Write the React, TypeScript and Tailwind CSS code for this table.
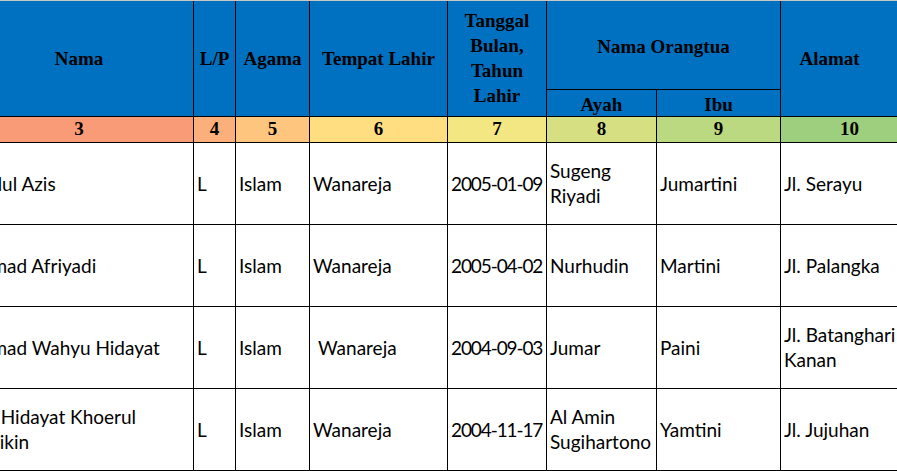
import React from 'react';

interface Siswa {
  nama: string;
  lp: string;
  agama: string;
  tempat: string;
  tanggal: string;
  ayah: string;
  ibu: string;
  alamat: string;
  indent?: boolean;
}

const rows: Siswa[] = [
  { nama: 'Abdul Azis', lp: 'L', agama: 'Islam', tempat: 'Wanareja', tanggal: '2005-01-09', ayah: 'Sugeng Riyadi', ibu: 'Jumartini', alamat: 'Jl. Serayu' },
  { nama: 'Ahmad Afriyadi', lp: 'L', agama: 'Islam', tempat: 'Wanareja', tanggal: '2005-04-02', ayah: 'Nurhudin', ibu: 'Martini', alamat: 'Jl. Palangka' },
  { nama: 'Ahmad Wahyu Hidayat', lp: 'L', agama: 'Islam', tempat: 'Wanareja', tanggal: '2004-09-03', ayah: 'Jumar', ibu: 'Paini', alamat: 'Jl. Batanghari Kanan', indent: true },
  { nama: 'Adi Hidayat Khoerul Sodikin', lp: 'L', agama: 'Islam', tempat: 'Wanareja', tanggal: '2004-11-17', ayah: 'Al Amin Sugihartono', ibu: 'Yamtini', alamat: 'Jl. Jujuhan' },
];

// nomor kolom dengan warna gradasi seperti di lembar excel
const nomor = [
  { n: '3', bg: 'bg-[#f99b77]' },
  { n: '4', bg: 'bg-[#fbb07b]' },
  { n: '5', bg: 'bg-[#fdc57e]' },
  { n: '6', bg: 'bg-[#ffde82]' },
  { n: '7', bg: 'bg-[#f3e783]' },
  { n: '8', bg: 'bg-[#d6df82]' },
  { n: '9', bg: 'bg-[#bbd980]' },
  { n: '10', bg: 'bg-[#9ecf7e]' },
];

const th = 'border border-black bg-[#0070c0] text-center align-middle font-bold text-black p-0';
const td = 'border border-black align-middle text-left text-black px-[3px] leading-[25px]';

export default function App() {
  return (
    <div className="w-[897px] h-[471px] overflow-hidden bg-white">
      <div className="h-px bg-[#c8c8c8]" />
      <table className="-ml-[36px] table-fixed border-collapse w-[954px] font-['Liberation_Serif',serif] text-[19px] leading-[25px]">
        <colgroup>
          <col className="w-[229px]" />
          <col className="w-[42px]" />
          <col className="w-[74px]" />
          <col className="w-[138px]" />
          <col className="w-[99px]" />
          <col className="w-[110px]" />
          <col className="w-[124px]" />
          <col className="w-[138px]" />
        </colgroup>
        <thead>
          <tr className="h-[88px]">
            <th rowSpan={2} className={`${th} border-t-0`}>Nama</th>
            <th rowSpan={2} className={`${th} border-t-0`}>L/P</th>
            <th rowSpan={2} className={`${th} border-t-0`}>Agama</th>
            <th rowSpan={2} className={`${th} border-t-0`}>Tempat Lahir</th>
            <th rowSpan={2} className={`${th} border-t-0`}>
              Tanggal
              <br />
              Bulan,
              <br />
              Tahun
              <br />
              Lahir
            </th>
            <th colSpan={2} className={`${th} border-t-0 pt-[4px]`}>Nama Orangtua</th>
            <th rowSpan={2} className={`${th} border-t-0 pr-[40px]`}>Alamat</th>
          </tr>
          <tr className="h-[26px]">
            <th className={`${th} leading-[22px] pt-[4px]`}>Ayah</th>
            <th className={`${th} leading-[22px] pt-[4px]`}>Ibu</th>
          </tr>
          <tr className="h-[26px]">
            {nomor.map((k) => (
              <th key={k.n} className={`border border-black ${k.bg} text-center align-middle font-bold text-black p-0 leading-[24px]`}>
                {k.n}
              </th>
            ))}
          </tr>
        </thead>
        <tbody className="font-['Lato',sans-serif] text-[19px]">
          {rows.map((r) => (
            <tr key={r.nama} className="h-[82px]">
              <td className={td}>{r.nama}</td>
              <td className={td}>{r.lp}</td>
              <td className={td}>{r.agama}</td>
              <td className={`${td} ${r.indent ? 'pl-[8px]' : ''}`}>{r.tempat}</td>
              <td className={`${td} whitespace-nowrap tracking-[-1.1px]`}>{r.tanggal}</td>
              <td className={td}>{r.ayah}</td>
              <td className={td}>{r.ibu}</td>
              <td className={td}>{r.alamat}</td>
            </tr>
          ))}
        </tbody>
      </table>
    </div>
  );
}
